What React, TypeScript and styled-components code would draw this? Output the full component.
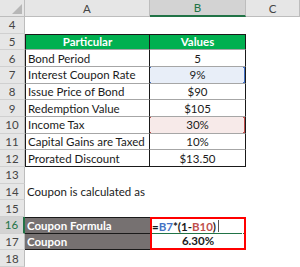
import React from 'react';
import styled, { createGlobalStyle, css } from 'styled-components';

const GlobalStyle = createGlobalStyle`
  html, body {
    margin: 0;
    padding: 0;
    background: #fff;
  }
  body {
    font-family: Lato, "Liberation Sans", sans-serif;
  }
`;

const ROW_H = 250 / 15;

const Sheet = styled.div`
  display: grid;
  grid-template-columns: 25px 125px 96px 54px;
  grid-template-rows: 17px repeat(15, ${ROW_H}px);
  width: 300px;
  height: 267px;
  overflow: hidden;
  background: #fff;
`;

const Corner = styled.div`
  position: relative;
  background: #e6e6e6;
  border-right: 1px solid #bdbdbd;
  border-bottom: 1px solid #bdbdbd;
  box-sizing: border-box;

  &::after {
    content: '';
    position: absolute;
    right: 2px;
    bottom: 2px;
    width: 0;
    height: 0;
    border-left: 10px solid transparent;
    border-bottom: 10px solid #b7b7b7;
  }
`;

const ColHeader = styled.div<{ $active?: boolean }>`
  display: flex;
  align-items: center;
  justify-content: center;
  box-sizing: border-box;
  font-size: 11.5px;
  background: ${p => (p.$active ? '#d3d3d3' : '#e6e6e6')};
  color: ${p => (p.$active ? '#217346' : '#444')};
  border-right: 1px solid #bdbdbd;
  border-bottom: ${p => (p.$active ? '2px solid #217346' : '1px solid #bdbdbd')};
`;

const RowHeader = styled.div<{ $active?: boolean }>`
  display: flex;
  align-items: center;
  justify-content: center;
  box-sizing: border-box;
  font-size: 11.5px;
  background: ${p => (p.$active ? '#d3d3d3' : '#e6e6e6')};
  color: ${p => (p.$active ? '#217346' : '#444')};
  border-right: ${p => (p.$active ? '2px solid #217346' : '1px solid #bdbdbd')};
  border-bottom: 1px solid #d0d0d0;
`;

type Edge = 'black' | 'gray' | 'red' | undefined;

const edge = (e: Edge) =>
  e === 'black' ? '1px solid #1a1a1a' : e === 'gray' ? '1px solid #a6a6a6' : e === 'red' ? '2px solid #ff0000' : 'none';

const Cell = styled.div<{
  $fill?: string;
  $color?: string;
  $bold?: boolean;
  $align?: 'left' | 'center';
  $top?: Edge;
  $bottom?: Edge;
  $left?: Edge;
  $right?: Edge;
  $overflow?: boolean;
}>`
  position: relative;
  display: flex;
  align-items: center;
  justify-content: ${p => (p.$align === 'center' ? 'center' : 'flex-start')};
  box-sizing: border-box;
  padding: 0 2px;
  font-size: 11.5px;
  white-space: nowrap;
  overflow: ${p => (p.$overflow ? 'visible' : 'hidden')};
  z-index: ${p => (p.$overflow ? 1 : 'auto')};
  background: ${p => p.$fill || 'transparent'};
  color: ${p => p.$color || '#1a1a1a'};
  font-weight: ${p => (p.$bold ? 700 : 400)};
  border-top: ${p => edge(p.$top)};
  border-bottom: ${p => edge(p.$bottom)};
  border-left: ${p => edge(p.$left)};
  border-right: ${p => edge(p.$right)};
`;

const RefBox = styled.div<{ $tone: 'blue' | 'red' }>`
  position: absolute;
  inset: -1px 0 -1px -1px;
  pointer-events: none;
  ${p =>
    p.$tone === 'blue'
      ? css`
          border: 1px solid #4472c4;
          background: rgba(68, 114, 196, 0.12);
        `
      : css`
          border: 1px solid #c0504d;
          background: rgba(192, 80, 77, 0.12);
        `}
`;

const Handle = styled.span<{ $tone: 'blue' | 'red'; $x: 'l' | 'r'; $y: 't' | 'b' }>`
  position: absolute;
  width: 4px;
  height: 4px;
  background: ${p => (p.$tone === 'blue' ? '#4472c4' : '#c0504d')};
  ${p => (p.$x === 'l' ? 'left: -3px;' : 'right: -3px;')}
  ${p => (p.$y === 't' ? 'top: -3px;' : 'bottom: -3px;')}
`;

const Label = styled.span`
  position: relative;
  z-index: 1;
`;

const ActiveLine = styled.div`
  position: absolute;
  left: 0;
  right: 1px;
  bottom: -1px;
  height: 2px;
  background: #217346;

  &::after {
    content: '';
    position: absolute;
    right: -2px;
    top: -1px;
    width: 3px;
    height: 4px;
    background: #217346;
    border: 1px solid #fff;
    box-sizing: border-box;
  }
`;

const Formula = styled.span`
  font-weight: 700;
  color: #1a1a1a;
  display: flex;
  align-items: center;
  margin-left: -2px;
`;

const Ref = styled.span<{ $tone: 'blue' | 'red' }>`
  color: ${p => (p.$tone === 'blue' ? '#4472c4' : '#c0504d')};
`;

const Caret = styled.span`
  display: inline-block;
  width: 1px;
  height: 12px;
  margin-left: 2px;
  background: #555;
`;

function Reference({ tone, children }: { tone: 'blue' | 'red'; children: React.ReactNode }) {
  return (
    <>
      <RefBox $tone={tone}>
        <Handle $tone={tone} $x="l" $y="t" />
        <Handle $tone={tone} $x="r" $y="t" />
        <Handle $tone={tone} $x="l" $y="b" />
        <Handle $tone={tone} $x="r" $y="b" />
      </RefBox>
      <Label>{children}</Label>
    </>
  );
}

const GREEN = '#00b050';
const DARK = '#767171';

const table: [string, string, 'blue' | 'red' | null][] = [
  ['Bond Period', '5', null],
  ['Interest Coupon Rate', '9%', 'blue'],
  ['Issue Price of Bond', '$90', null],
  ['Redemption Value', '$105', null],
  ['Income Tax', '30%', 'red'],
  ['Capital Gains are Taxed', '10%', null],
  ['Prorated Discount', '$13.50', null],
];

export default function App() {
  return (
    <>
      <GlobalStyle />
      <Sheet>
        <Corner />
        <ColHeader>A</ColHeader>
        <ColHeader $active>B</ColHeader>
        <ColHeader>C</ColHeader>

        <RowHeader>4</RowHeader>
        <Cell />
        <Cell />
        <Cell />

        <RowHeader>5</RowHeader>
        <Cell $fill={GREEN} $color="#fff" $bold $align="center" $top="black" $left="black" $right="black" $bottom="gray">
          Particular
        </Cell>
        <Cell $fill={GREEN} $color="#fff" $bold $align="center" $top="black" $right="black" $bottom="gray">
          Values
        </Cell>
        <Cell />

        {table.map(([name, value, tone], i) => {
          const last = i === table.length - 1;
          return (
            <React.Fragment key={name}>
              <RowHeader>{6 + i}</RowHeader>
              <Cell $left="black" $right="black" $bottom={last ? 'black' : 'gray'}>
                {name}
              </Cell>
              <Cell $align="center" $right="black" $bottom={last ? 'black' : 'gray'}>
                {tone ? <Reference tone={tone}>{value}</Reference> : value}
              </Cell>
              <Cell />
            </React.Fragment>
          );
        })}

        <RowHeader>13</RowHeader>
        <Cell />
        <Cell />
        <Cell />

        <RowHeader>14</RowHeader>
        <Cell $overflow>Coupon is calculated as</Cell>
        <Cell />
        <Cell />

        <RowHeader>15</RowHeader>
        <Cell />
        <Cell />
        <Cell />

        <RowHeader $active>16</RowHeader>
        <Cell $fill={DARK} $color="#fff" $bold $top="black" $bottom="black">
          Coupon Formula
        </Cell>
        <Cell $top="red" $left="red" $right="red">
          <Formula>
            =<Ref $tone="blue">B7</Ref>*(1-<Ref $tone="red">B10</Ref>)<Caret />
          </Formula>
          <ActiveLine />
        </Cell>
        <Cell />

        <RowHeader>17</RowHeader>
        <Cell $fill={DARK} $color="#fff" $bold $bottom="black">
          Coupon
        </Cell>
        <Cell $align="center" $bold $bottom="red" $left="red" $right="red">
          6.30%
        </Cell>
        <Cell />

        <RowHeader>18</RowHeader>
        <Cell />
        <Cell />
        <Cell />
      </Sheet>
    </>
  );
}
